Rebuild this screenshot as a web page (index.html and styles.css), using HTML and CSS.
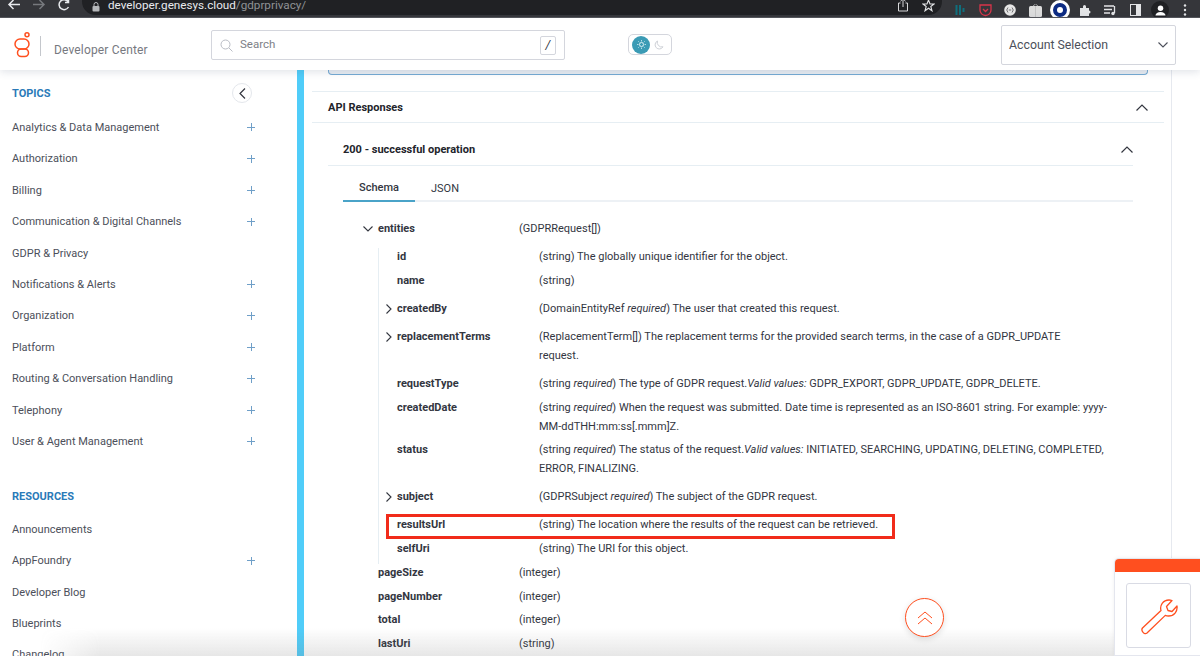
FILE: index.html
```html
<!DOCTYPE html>
<html lang="en">
<head>
<meta charset="utf-8">
<title>Developer Center</title>
<link rel="stylesheet" href="styles.css">
</head>
<body>
<div class="chrome">
  <svg class="nav-ic" width="14" height="12" viewBox="0 0 14 12"><path d="M13 5.500H2M6.500 1 2 5.500 6.500 10" fill="none" stroke="#e8eaed" stroke-width="1.500"/></svg>
  <svg class="nav-ic" width="14" height="12" viewBox="0 0 14 12"><path d="M1 5.500H12M7.500 1 12 5.500 7.500 10" fill="none" stroke="#77797d" stroke-width="1.500"/></svg>
  <svg class="nav-ic" width="14" height="13" viewBox="0 0 14 13"><path d="M11.500 8A5 5 0 1 1 11 2.500M11.500 0V3.500H8" fill="none" stroke="#e8eaed" stroke-width="1.500"/></svg>
  <div class="omnibox">
    <svg width="8" height="10" viewBox="0 0 8 10"><rect x="0.500" y="4" width="7" height="5.500" rx="1" fill="#b5b7ba"/><path d="M2 4V2.500a2 2 0 0 1 4 0V4" fill="none" stroke="#b5b7ba"/></svg>
    <span class="url">developer.genesys.cloud<span class="url-path">/gdprprivacy/</span></span>
    <svg class="omni-end" width="12" height="14" viewBox="0 0 12 14"><path d="M3.500 5H1.500V13H10.500V5H8.500M6 9V1M3.500 3.200 6 .8l2.500 2.400" fill="none" stroke="#d7d8da" stroke-width="1"/></svg>
    <svg width="13" height="13" viewBox="0 0 13 13"><path d="M6.500 1 8 5h4L8.800 7.500 10 11.800 6.500 9.300 3 11.800 4.200 7.500 1 5h4z" fill="none" stroke="#e2e3e5" stroke-width="1.100"/></svg>
  </div>
  <div class="exts">
    <svg width="10" height="12" viewBox="0 0 10 12"><path d="M1.500 1V11M5 1V11M8.500 4V8" stroke="#0f6f7d" stroke-width="2"/></svg>
    <svg width="13" height="13" viewBox="0 0 13 13"><path d="M1 1H12V6A5.500 5.500 0 0 1 1 6Z" fill="none" stroke="#d8354a" stroke-width="1.300"/><path d="M4 5l2.500 2.500L9 5" fill="none" stroke="#d8354a" stroke-width="1.300"/></svg>
    <svg width="12" height="12" viewBox="0 0 12 12"><circle cx="6" cy="6" r="5.800" fill="#e6e6e6"/><path d="M4 3.500a3.500 3.500 0 0 0 0 5M8 3.500a3.500 3.500 0 0 1 0 5M4.800 6H7.200" fill="none" stroke="#55565a" stroke-width=".8"/></svg>
    <svg width="13" height="13" viewBox="0 0 13 13"><rect y="2" width="13" height="11" rx="1.500" fill="#dcdcdc"/><path d="M4 2 6.500 0 9 2M6.500 2V13" fill="none" stroke="#bcbcbc" stroke-width=".8"/></svg>
    <span class="ext-ring"></span>
    <svg width="13" height="13" viewBox="0 0 13 13"><path d="M1 4H4V2.500a1.500 1.500 0 0 1 3 0V4H10V6.500a1.500 1.500 0 0 1 0 3V12H1Z" fill="#e3e4e6"/></svg>
    <svg width="13" height="12" viewBox="0 0 13 12"><path d="M0 2H10M0 5.500H8M0 9H6M10.500 2V9" stroke="#e3e4e6" stroke-width="1.300" fill="none"/><circle cx="9" cy="9.500" r="1.700" fill="#e3e4e6"/></svg>
    <svg width="11" height="12" viewBox="0 0 11 12"><rect x="0.500" y="0.500" width="10" height="11" fill="none" stroke="#e3e4e6"/><rect x="6" y="1" width="4" height="10" fill="#e3e4e6"/></svg>
    <span class="avatar"><svg width="11" height="11" viewBox="0 0 12 12"><circle cx="6" cy="3.500" r="3" fill="#fff"/><path d="M0.500 11.500a5.500 4 0 0 1 11 0Z" fill="#fff"/></svg></span>
    <svg width="4" height="12" viewBox="0 0 4 12"><circle cx="2" cy="1.500" r="1.200" fill="#e3e4e6"/><circle cx="2" cy="6" r="1.200" fill="#e3e4e6"/><circle cx="2" cy="10.500" r="1.200" fill="#e3e4e6"/></svg>
  </div>
</div>

<header class="topbar">
  <div class="brand">
    <svg width="18" height="26" viewBox="0 0 18 26"><g fill="none" stroke="#ff4f1f" stroke-width="1.500"><circle cx="13" cy="2.800" r="2"/><rect x="1" y="7" width="14" height="10" rx="5"/><rect x="3.500" y="17" width="11" height="7.500" rx="3.700"/></g></svg>
    <span class="brand-sep"></span>
    <span class="brand-name">Developer Center</span>
  </div>
  <div class="search">
    <svg width="13" height="13" viewBox="0 0 13 13"><circle cx="5.500" cy="5.500" r="4.500" fill="none" stroke="#b9bcc4"/><path d="M9 9l3.500 3.500" stroke="#b9bcc4"/></svg>
    <span class="search-text">Search</span>
    <span class="kbd">/</span>
  </div>
  <div class="theme">
    <span class="sun"><svg width="9" height="9" viewBox="0 0 9 9"><circle cx="4.500" cy="4.500" r="2" fill="none" stroke="#d7edf3"/><path d="M4.500 0V1.500M4.500 7.500V9M0 4.500H1.500M7.500 4.500H9M1.300 1.300 2.300 2.300M6.700 6.700 7.700 7.700M1.300 7.700 2.300 6.700M6.700 2.300 7.700 1.300" stroke="#d7edf3" stroke-width=".8"/></svg></span>
    <svg width="10" height="10" viewBox="0 0 10 10"><path d="M3.500 1A4.200 4.200 0 1 0 9 6.800 4.500 4.500 0 0 1 3.500 1Z" fill="none" stroke="#cfd2d8"/></svg>
  </div>
  <div class="account">
    <span>Account Selection</span>
    <svg width="10" height="6" viewBox="0 0 10 6"><path d="M.5.500 5 5 9.500.5" fill="none" stroke="#4c4f5a" stroke-width="1.100"/></svg>
  </div>
</header>

<div class="layout">
  <aside class="sidebar">
    <div class="side-head">
      <span class="side-title">TOPICS</span>
      <span class="collapse"><svg width="7" height="11" viewBox="0 0 7 11"><path d="M6 .5 1 5.500 6 10.500" fill="none" stroke="#33363f" stroke-width="1.200"/></svg></span>
    </div>
    <ul class="side-list">
      <li>Analytics &amp; Data Management<i class="plus"></i></li>
      <li>Authorization<i class="plus"></i></li>
      <li>Billing<i class="plus"></i></li>
      <li>Communication &amp; Digital Channels<i class="plus"></i></li>
      <li>GDPR &amp; Privacy</li>
      <li>Notifications &amp; Alerts<i class="plus"></i></li>
      <li>Organization<i class="plus"></i></li>
      <li>Platform<i class="plus"></i></li>
      <li>Routing &amp; Conversation Handling<i class="plus"></i></li>
      <li>Telephony<i class="plus"></i></li>
      <li>User &amp; Agent Management<i class="plus"></i></li>
    </ul>
    <div class="side-title side-title-2">RESOURCES</div>
    <ul class="side-list">
      <li>Announcements</li>
      <li>AppFoundry<i class="plus"></i></li>
      <li>Developer Blog</li>
      <li>Blueprints</li>
      <li>Changelog</li>
    </ul>
  </aside>
  <div class="stripe"></div>
  <main class="main">
    <div class="content">
      <div class="prev-box"></div>
      <section class="api">
        <div class="api-head"><span>API Responses</span>
          <svg width="12" height="7" viewBox="0 0 12 7"><path d="M.5 6.500 6 1l5.500 5.500" fill="none" stroke="#33363f" stroke-width="1.200"/></svg></div>
        <div class="resp-head"><span>200 - successful operation</span>
          <svg width="12" height="7" viewBox="0 0 12 7"><path d="M.5 6.500 6 1l5.500 5.500" fill="none" stroke="#33363f" stroke-width="1.200"/></svg></div>
        <div class="tabs"><span class="tab tab-on">Schema</span><span class="tab">JSON</span></div>
        <div class="schema">
          <div class="row row-top"><span class="name"><svg class="car" width="10" height="6" viewBox="0 0 10 6"><path d="M.5.500 5 5 9.500.5" fill="none" stroke="#33363f" stroke-width="1.100"/></svg>entities</span><span class="desc">(GDPRRequest[])</span></div>
          <div class="nested">
            <div class="row r24"><span class="name">id</span><span class="desc">(string) The globally unique identifier for the object.</span></div>
            <div class="row r28"><span class="name">name</span><span class="desc">(string)</span></div>
            <div class="row r28"><span class="name exp"><svg class="car-r" width="6" height="10" viewBox="0 0 6 10"><path d="M.5.500 5 5 .5 9.500" fill="none" stroke="#33363f" stroke-width="1.100"/></svg>createdBy</span><span class="desc">(DomainEntityRef <em>required</em>) The user that created this request.</span></div>
            <div class="row r47"><span class="name exp"><svg class="car-r" width="6" height="10" viewBox="0 0 6 10"><path d="M.5.500 5 5 .5 9.500" fill="none" stroke="#33363f" stroke-width="1.100"/></svg>replacementTerms</span><span class="desc">(ReplacementTerm[]) The replacement terms for the provided search terms, in the case of a GDPR_UPDATE<br>request.</span></div>
            <div class="row r24"><span class="name">requestType</span><span class="desc">(string <em>required</em>) The type of GDPR request.<em>Valid values:</em> GDPR_EXPORT, GDPR_UPDATE, GDPR_DELETE.</span></div>
            <div class="row r42"><span class="name">createdDate</span><span class="desc">(string <em>required</em>) When the request was submitted. Date time is represented as an ISO-8601 string. For example: yyyy-MM-ddTHH:mm:ss[.mmm]Z.</span></div>
            <div class="row r47"><span class="name">status</span><span class="desc">(string <em>required</em>) The status of the request.<em>Valid values:</em> INITIATED, SEARCHING, UPDATING, DELETING, COMPLETED, ERROR, FINALIZING.</span></div>
            <div class="row r28"><span class="name exp"><svg class="car-r" width="6" height="10" viewBox="0 0 6 10"><path d="M.5.500 5 5 .5 9.500" fill="none" stroke="#33363f" stroke-width="1.100"/></svg>subject</span><span class="desc">(GDPRSubject <em>required</em>) The subject of the GDPR request.</span></div>
            <div class="row r24 marked"><span class="name">resultsUrl</span><span class="desc">(string) The location where the results of the request can be retrieved.</span></div>
            <div class="row r24"><span class="name">selfUri</span><span class="desc">(string) The URI for this object.</span></div>
          </div>
          <div class="row r235 top-level"><span class="name">pageSize</span><span class="desc">(integer)</span></div>
          <div class="row r235 top-level"><span class="name">pageNumber</span><span class="desc">(integer)</span></div>
          <div class="row r235 top-level"><span class="name">total</span><span class="desc">(integer)</span></div>
          <div class="row r235 top-level"><span class="name">lastUri</span><span class="desc">(string)</span></div>
        </div>
      </section>
    </div>
  </main>
</div>

<div class="bottom-fade"></div>
<button class="to-top"><svg width="16" height="14" viewBox="0 0 16 14"><path d="M1 7 8 1l7 6M1 13 8 7l7 6" fill="none" stroke="#ff4f1f" stroke-width="1"/></svg></button>
<div class="tool-panel">
  <div class="tool-tab"></div>
  <div class="tool-btn"><svg width="38" height="38" viewBox="0 0 38 38"><path d="M2.500 31 21 13.500C19.500 8.500 23 3 29 3c1.200 0 2 .2 3 .5L26.500 9.500l1.500 4 4 1 5-5.500c.8 5.500-3 10-8.500 10-1.300 0-2.300-.2-3.200-.6L7 36c-2.500 2.300-6.500-2.200-4.500-5Z" fill="none" stroke="#ff4f1f" stroke-width="1.300" stroke-linejoin="round"/></svg></div>
</div>
</body>
</html>
```

FILE: styles.css
```css
* { box-sizing: border-box; }
html, body { margin: 0; height: 656px; overflow: hidden; background: #fff; }
body { font-family: Roboto, "Liberation Sans", sans-serif; font-size: 11px; color: #33363f; position: relative; }

.chrome { height: 18px; background: #35363a; display: flex; align-items: flex-start; padding-left: 7px; gap: 11px; overflow: hidden; border-bottom: 1px solid #55565a; }
.nav-ic { flex: none; margin-top: -1px; }
.omnibox { width: 860px; flex: none; margin-top: -12px; height: 27px; background: #202124; border-radius: 14px; display: flex; align-items: flex-end; gap: 8px; padding: 0 7px 3px 10px; }
.omnibox svg { flex: none; }
.url { color: #e8eaed; font-size: 11.700px; line-height: 15px; margin-bottom: -1px; }
.url-path { color: #8f9194; }
.omni-end { margin-left: auto; margin-right: 5px; }
.exts { display: grid; grid-auto-flow: column; grid-auto-columns: 25px; justify-items: center; align-items: center; height: 11px; margin-left: -5.500px; }
.ext-ring { width: 20px; height: 20px; border-radius: 50%; background: #0c2b83; border: 3px solid #fff; position: relative; }
.ext-ring::after { content: ""; position: absolute; inset: 4px; border-radius: 50%; background: #fff; }
.avatar { width: 18px; height: 18px; border-radius: 50%; background: #202124; display: flex; align-items: center; justify-content: center; }

.topbar { height: 52px; background: #fff; display: flex; align-items: flex-start; position: relative; z-index: 3; box-shadow: 0 2px 8px rgba(60,80,110,.16); }
.brand { display: flex; align-items: center; width: 211px; height: 52px; padding-left: 14px; padding-top: 2px; }
.brand-sep { width: 1px; height: 20px; background: #c4c7cc; margin: 2px 13px 0 8px; }
.brand-name { color: #77797f; font-size: 12px; margin-top: 9px; letter-spacing: .15px; }
.search { width: 354px; height: 30px; margin-top: 12px; border: 1px solid #d4d6dd; border-radius: 2px; display: flex; align-items: center; padding: 0 8px; }
.search-text { color: #7d7f87; font-size: 11.500px; margin: 0 0 2px 7px; }
.kbd { margin-left: auto; width: 16px; height: 19px; border: 1px solid #d4d6dd; border-radius: 2px; color: #33363f; display: flex; align-items: center; justify-content: center; font-style: italic; font-size: 12px; }
.theme { width: 44px; height: 21px; margin: 16px 0 0 63px; border: 1px solid #d4d6dd; border-radius: 5px; display: flex; align-items: center; padding-left: 3px; gap: 4px; }
.sun { width: 18px; height: 18px; border-radius: 50%; background: #3b9bb5; display: flex; align-items: center; justify-content: center; }
.account { width: 175px; height: 40px; margin: 7px 0 0 329px; border: 1px solid #d4d6dd; border-radius: 2px; display: flex; align-items: center; justify-content: space-between; padding: 0 7px 1px; color: #4c4f5a; font-size: 12.300px; }

.layout { display: flex; height: 586px; overflow: hidden; }
.sidebar { width: 297px; flex: none; padding: 0 12px; overflow: hidden; }
.side-head { display: flex; align-items: center; justify-content: space-between; height: 20px; margin-top: 13px; margin-bottom: 8.800px; padding-right: 33px; }
.side-title { color: #2a7ab8; font-weight: 700; font-size: 11px; }
.side-title-2 { margin: 31.600px 0 9px; line-height: 16px; }
.collapse { width: 20px; height: 20px; border: 1px solid #e4e7ec; border-radius: 50%; display: flex; align-items: center; justify-content: center; }
.side-list { list-style: none; margin: 0; padding: 0 30px 0 0; }
.side-list li { height: 31.400px; display: flex; align-items: center; justify-content: space-between; color: #4c4f5a; font-size: 11px; }
.plus { display: block; width: 8px; height: 8px; background: linear-gradient(#6f9fc8,#6f9fc8) center/8px 1px no-repeat, linear-gradient(#6f9fc8,#6f9fc8) center/1px 8px no-repeat; }
.stripe { width: 7px; flex: none; background: #50cdf9; }

.main { flex: 1; min-width: 0; overflow: hidden; padding: 0 28px 0 8px; }
.content { width: 860px; height: 586px; border-right: 1px solid #e6e9ef; }
.prev-box { height: 5px; margin: 0 16px; background: #e8edf3; border: 1px solid #74aad3; border-top: 0; border-radius: 0 0 4px 4px; width: 820px; }
.api { margin-top: 16px; width: 852px; }
.api-head { height: 32px; padding: 0 16px; border-top: 1px solid #e6eef3; border-bottom: 1px solid #e6eef3; display: flex; align-items: center; justify-content: space-between; font-weight: 700; font-size: 11px; color: #22242b; }
.resp-head { height: 43px; margin: 0 31px 0 16px; padding: 10px 0 0 15px; display: flex; align-items: center; justify-content: space-between; border-bottom: 1px solid #e6eef3; font-weight: 700; font-size: 11px; color: #22242b; }
.tabs { display: flex; margin: 0 31px; border-bottom: 2px solid #edf1f5; height: 36px; }
.tab { height: 36px; padding-top: 9px; display: flex; align-items: center; justify-content: center; width: 60px; font-size: 11px; }
.tab-on { width: 72px; font-weight: 500; border-bottom: 2px solid #4aa3c8; }
.schema { padding: 18px 0 0 66px; position: relative; }
.row { display: flex; line-height: 18.500px; font-size: 11px; }
.row-top { height: 28px; margin-left: -15px; }
.row-top .name { width: 156px; padding-left: 15px; }
.name { flex: none; width: 141px; font-weight: 700; font-size: 11px; color: #33363f; position: relative; }
.desc { color: #33363f; width: 570px; }
.nested { border-left: 1px solid #e6eef3; padding-left: 18px; }
.nested .name { width: 142px; }
.car { position: absolute; left: 0; top: 6px; }
.car-r { position: absolute; left: -11px; top: 4px; }
.r24 { height: 24px; }
.r28 { height: 28px; }
.r42 { height: 42px; }
.r47 { height: 47px; }
.r235 { height: 23.500px; }
.marked { position: relative; }
.marked::after { content: ""; position: absolute; left: -11px; top: -2px; width: 503px; height: 19px; border: 3px solid #f12b1a; }

.bottom-fade { position: absolute; left: 40px; right: 0; bottom: 0; height: 28px; background: linear-gradient(rgba(120,120,120,0), rgba(120,120,120,.18)); -webkit-mask-image: linear-gradient(to right, transparent, #000 60px); mask-image: linear-gradient(to right, transparent, #000 60px); pointer-events: none; }
.to-top { position: absolute; left: 905px; top: 598px; width: 39px; height: 39px; background: #fff; border: 1.500px solid #ff4f1f; border-radius: 50%; padding: 0; display: flex; align-items: center; justify-content: center; box-shadow: 0 2px 6px rgba(0,0,0,.12); }
.tool-panel { position: absolute; left: 1114px; top: 558px; width: 86px; height: 98px; background: #fff; border: 1px solid #e4e6ee; border-right: 0; border-radius: 5px 0 0 0; box-shadow: 0 0 4px rgba(0,0,0,.06); }
.tool-tab { height: 13px; background: #ff4f1f; border-radius: 4px 0 0 0; }
.tool-btn { width: 65px; height: 65px; margin: 11px 0 0 11px; border: 1px solid #d9dbe4; border-radius: 3px; display: flex; align-items: center; justify-content: center; }
```
